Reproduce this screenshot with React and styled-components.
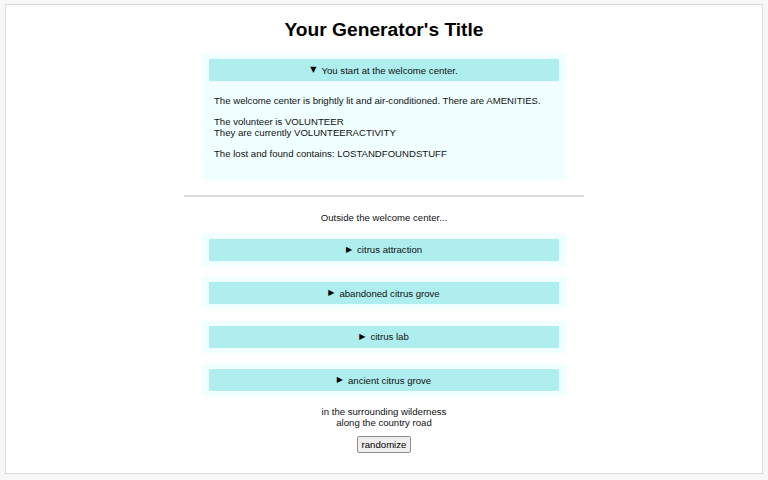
import React from "react";
import styled, { createGlobalStyle } from "styled-components";

const GlobalStyle = createGlobalStyle`
  html, body {
    margin: 0;
    padding: 0;
    background: #f7f7f7;
  }
  body {
    font-family: "Liberation Sans", Arial, sans-serif;
    color: #111;
  }
`;

const Card = styled.div`
  margin: 4px 5px;
  min-height: calc(100vh - 10px);
  box-sizing: border-box;
  background: #ffffff;
  border: 1px solid #dcdcdc;
  display: flex;
  flex-direction: column;
  align-items: center;
  padding: 14px 0 20px;
`;

const Title = styled.h1`
  margin: 0 0 14px;
  font-size: 19.2px;
  line-height: 22px;
  font-weight: bold;
  color: #000;
`;

const Section = styled.div`
  width: 362px;
  box-sizing: border-box;
  background: #f0ffff;
  box-shadow: 0 0 3px 1px #f0ffff;
  padding: 4px 6px ${(p) => (p.open ? "10px" : "4px")};
  margin-bottom: ${(p) => p.gap || 0}px;
`;

const Summary = styled.div`
  height: 22px;
  background: #afeeee;
  display: flex;
  align-items: center;
  justify-content: center;
  gap: 5px;
  font-size: 9.6px;
  color: #111;
  cursor: pointer;
`;

const Arrow = styled.span`
  font-family: "DejaVu Sans", sans-serif;
  font-size: 8px;
  line-height: 1;
  color: #000;
`;

const Body = styled.div`
  padding: 4px 5px 0;
  font-size: 9.6px;
  line-height: 11px;
`;

const Para = styled.p`
  margin: 10px 0;
`;

const Rule = styled.hr`
  width: 400px;
  border: none;
  border-top: 2px solid #dedede;
  margin: 16px 0 15px;
`;

const Line = styled.div`
  font-size: 9.6px;
  line-height: 11px;
  text-align: center;
  margin-bottom: ${(p) => p.gap || 0}px;
`;

const Button = styled.button`
  font-family: "Liberation Sans", Arial, sans-serif;
  font-size: 9.6px;
  color: #000;
  background: #efefef;
  border: 1px solid #8f8f8f;
  border-radius: 2px;
  padding: 2px 4px;
  height: 17px;
  line-height: 11px;
`;

const places = [
  "citrus attraction",
  "abandoned citrus grove",
  "citrus lab",
  "ancient citrus grove",
];

export default function App() {
  return (
    <>
      <GlobalStyle />
      <Card>
        <Title>Your Generator's Title</Title>
        <Section open>
          <Summary>
            <Arrow>▼</Arrow> You start at the welcome center.
          </Summary>
          <Body>
            <Para>
              The welcome center is brightly lit and air-conditioned. There are AMENITIES.
            </Para>
            <Para>
              The volunteer is VOLUNTEER
              <br />
              They are currently VOLUNTEERACTIVITY
            </Para>
            <Para>The lost and found contains: LOSTANDFOUNDSTUFF</Para>
          </Body>
        </Section>
        <Rule />
        <Line gap={11.5}>Outside the welcome center...</Line>
        {places.map((place, i) => (
          <Section key={place} gap={i < places.length - 1 ? 13.5 : 11}>
            <Summary>
              <Arrow>▶</Arrow> {place}
            </Summary>
          </Section>
        ))}
        <Line>in the surrounding wilderness</Line>
        <Line gap={8}>along the country road</Line>
        <Button>randomize</Button>
      </Card>
    </>
  );
}
